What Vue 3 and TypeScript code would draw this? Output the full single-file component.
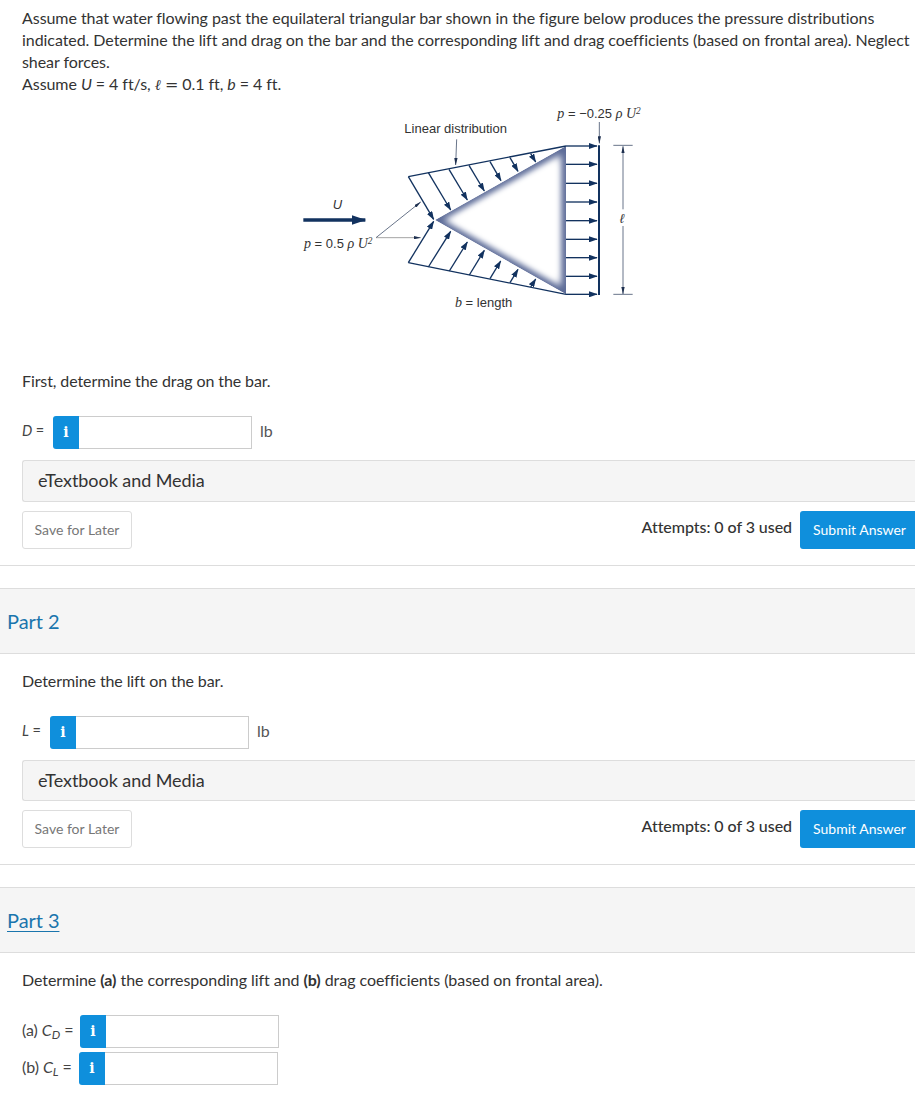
<script setup lang="ts">
interface Arrow { x1: number; y1: number; x2: number; y2: number }

const topArrows: Arrow[] = [
  { x1: 355, y1: 242, x2: 431, y2: 370 },
  { x1: 415, y1: 230, x2: 482, y2: 342 },
  { x1: 477, y1: 220, x2: 532, y2: 312 },
  { x1: 537, y1: 208, x2: 583, y2: 285 },
  { x1: 600, y1: 197, x2: 633, y2: 254 },
  { x1: 660, y1: 185, x2: 684, y2: 226 },
  { x1: 722, y1: 173, x2: 737, y2: 198 },
]
const bottomArrows: Arrow[] = [
  { x1: 355, y1: 500, x2: 431, y2: 376 },
  { x1: 415, y1: 513, x2: 482, y2: 406 },
  { x1: 478, y1: 525, x2: 532, y2: 438 },
  { x1: 538, y1: 537, x2: 583, y2: 463 },
  { x1: 600, y1: 548, x2: 632, y2: 495 },
  { x1: 660, y1: 560, x2: 684, y2: 520 },
  { x1: 722, y1: 573, x2: 737, y2: 549 },
]
const rightY: number[] = [150, 205, 262, 318, 374, 430, 485, 541, 595]
</script>

<template>
  <main class="page">
    <section class="intro">
      <p>Assume that water flowing past the equilateral triangular bar shown in the figure below produces the pressure distributions indicated. Determine the lift and drag on the bar and the corresponding lift and drag coefficients (based on frontal area). Neglect shear forces.</p>
      <p>Assume <i>U</i> = 4 ft/s, <i class="ell">ℓ</i> <span class="eq">=</span> 0.1 ft, <i>b</i> = 4 ft.</p>
    </section>

    <svg class="figure" viewBox="0 0 1080 675" width="360" height="225" aria-label="Triangular bar pressure distribution">
      <defs>
        <marker id="head" markerWidth="6.5" markerHeight="4.5" refX="6" refY="2.25" orient="auto">
          <path d="M0 0 L6.5 2.25 L0 4.5 Z" fill="#12325f" />
        </marker>
        <marker id="thin" markerWidth="11" markerHeight="5" refX="10.5" refY="2.5" orient="auto">
          <path d="M0 0 L11 2.5 L0 5 Z" fill="#1d2f4f" />
        </marker>
        <filter id="soft" x="-20%" y="-20%" width="140%" height="140%">
          <feGaussianBlur stdDeviation="9" />
        </filter>
        <clipPath id="tri"><path d="M435 372 L828 150 L828 595 Z" /></clipPath>
      </defs>

      <g clip-path="url(#tri)">
        <path d="M435 372 L828 150 L828 595 Z" fill="#5d6c98" />
        <path d="M462 372 L812 176 L812 570 Z" fill="#fff" filter="url(#soft)" />
        <path d="M490 372 L800 197 L800 548 Z" fill="#fff" filter="url(#soft)" />
      </g>

      <g fill="none" stroke="#12325f" stroke-width="4">
        <path d="M355 242 L828 150 M355 500 L828 595" />
        <line v-for="(a, i) in topArrows" :key="'t' + i" :x1="a.x1" :y1="a.y1" :x2="a.x2" :y2="a.y2" marker-end="url(#head)" />
        <line v-for="(a, i) in bottomArrows" :key="'b' + i" :x1="a.x1" :y1="a.y1" :x2="a.x2" :y2="a.y2" marker-end="url(#head)" />
        <line v-for="y in rightY" :key="y" x1="828" :y1="y" x2="921" :y2="y" marker-end="url(#head)" />
        <path d="M927 148 V597" stroke-width="6" />
        <line x1="40" y1="372" x2="226" y2="372" stroke-width="10" />
      </g>
      <path d="M186 358 L228 372 L186 386 Z" fill="#12325f" />

      <g fill="none" stroke="#1d2f4f" stroke-width="2">
        <path d="M970 148 H1028 M970 595 H1028" />
        <line x1="999" y1="340" x2="999" y2="151" marker-end="url(#thin)" />
        <line x1="999" y1="390" x2="999" y2="594" marker-end="url(#thin)" />
        <line x1="258" y1="425" x2="392" y2="318" marker-end="url(#thin)" />
        <line x1="258" y1="425" x2="392" y2="425" stroke="#777" marker-end="url(#thin)" />
        <line x1="500" y1="130" x2="497" y2="207" marker-end="url(#thin)" />
        <line x1="928" y1="78" x2="928" y2="142" marker-end="url(#thin)" />
      </g>

      <g class="fig-text">
        <text x="343" y="111">Linear distribution</text>
        <text x="802" y="67"><tspan class="fig-i">p</tspan> = −0.25 <tspan class="fig-i">ρ U</tspan><tspan class="fig-sup" dy="-14">2</tspan></text>
        <text x="42" y="457"><tspan class="fig-i">p</tspan> = 0.5 <tspan class="fig-i">ρ U</tspan><tspan class="fig-sup" dy="-14">2</tspan></text>
        <text x="495" y="634"><tspan class="fig-i">b</tspan> = length</text>
        <text x="128" y="340" class="fig-i">U</text>
        <text x="989" y="380" class="fig-i">ℓ</text>
      </g>
    </svg>

    <section class="question q1">
      <p class="prompt">First, determine the drag on the bar.</p>
      <div class="answer-row">
        <span class="label"><i>D</i> =</span>
        <span class="field"><span class="info">i</span><span class="box"></span></span>
        <span class="unit">lb</span>
      </div>
      <div class="media">eTextbook and Media</div>
      <div class="actions">
        <button class="save" type="button">Save for Later</button>
        <span class="attempts">Attempts: 0 of 3 used</span>
        <button class="submit" type="button">Submit Answer</button>
      </div>
    </section>

    <header class="part">Part 2</header>

    <section class="question q2">
      <p class="prompt">Determine the lift on the bar.</p>
      <div class="answer-row">
        <span class="label"><i>L</i> =</span>
        <span class="field"><span class="info">i</span><span class="box"></span></span>
        <span class="unit">lb</span>
      </div>
      <div class="media">eTextbook and Media</div>
      <div class="actions">
        <button class="save" type="button">Save for Later</button>
        <span class="attempts">Attempts: 0 of 3 used</span>
        <button class="submit" type="button">Submit Answer</button>
      </div>
    </section>

    <header class="part current">Part 3</header>

    <section class="question q3">
      <p class="prompt">Determine <b>(a)</b> the corresponding lift and <b>(b)</b> drag coefficients (based on frontal area).</p>
      <div class="answer-row tight first">
        <span class="label">(a) <i>C<sub>D</sub></i> =</span>
        <span class="field"><span class="info">i</span><span class="box"></span></span>
      </div>
      <div class="answer-row tight">
        <span class="label">(b) <i>C<sub>L</sub></i> =</span>
        <span class="field"><span class="info">i</span><span class="box"></span></span>
      </div>
    </section>
  </main>
</template>

<style>
html, body { margin: 0; background: #fff; overflow: hidden; }
</style>

<style scoped>
.page {
  width: 915px;
  height: 1094px;
  overflow: hidden;
  font-family: Lato, "Liberation Sans", sans-serif;
  font-size: 16px;
  line-height: 22px;
  letter-spacing: -0.06px;
  color: #333;
  background: #fff;
}
p { margin: 0; }
.intro { padding: 7px 0 0 22px; }
.ell { font-family: "DejaVu Serif", serif; font-size: 15px; }
.eq { font-family: "DejaVu Sans", sans-serif; }
.figure { display: block; margin: 0 0 0 290px; height: 225px; }
.fig-text text { font-family: "Liberation Sans", sans-serif; font-size: 39px; fill: #333; letter-spacing: 0; }
.fig-i { font-family: "Liberation Serif", serif; font-style: italic; font-size: 42px; }
.fig-sup { font-size: 28px; font-family: "Liberation Serif", serif; font-style: italic; }

.question { padding: 0 0 0 22px; }
.q1 { padding-top: 49px; height: 245px; box-sizing: border-box; border-bottom: 1px solid #ddd; }
.q2 { padding-top: 16px; height: 211px; box-sizing: border-box; border-bottom: 1px solid #ddd; }
.q3 { padding-top: 16px; }
.prompt { height: 22px; letter-spacing: -0.1px; }
.q3 .prompt { letter-spacing: -0.06px; }
.answer-row { display: flex; align-items: center; height: 33px; margin-top: 24px; }
.answer-row.tight + .answer-row.tight { margin-top: 4px; }
.label { font-size: 14.5px; color: #444; white-space: nowrap; padding-bottom: 3px; }
.q1 .label { width: 31px; }
.q2 .label { width: 28px; }
.q3 .label { width: 57px; font-size: 16px; }
.q3 .first .label { width: 58px; }
sub { font-size: 12px; line-height: 0; vertical-align: -3px; }
.field { display: flex; width: 199px; height: 33px; }
.info {
  width: 26px;
  flex: none;
  background: #0f8fdc;
  color: #fff;
  border-radius: 3px 0 0 3px;
  font-family: "DejaVu Serif", serif;
  font-weight: 700;
  font-size: 14px;
  line-height: 33px;
  text-align: center;
}
.box {
  flex: 1;
  border: 1px solid #ccc;
  border-left: none;
  background: #fff;
}
.unit { margin-left: 8px; font-size: 16px; color: #555; padding-bottom: 4px; }
.media {
  box-sizing: border-box;
  height: 42px;
  margin-top: 11px;
  padding-left: 15px;
  background: #f5f5f5;
  border: 1px solid #ddd;
  border-right: none;
  border-radius: 3px 0 0 3px;
  font-size: 18px;
  line-height: 39px;
  color: #333;
}
.q2 .media { height: 41px; }
.actions { display: flex; align-items: flex-start; margin-top: 9px; }
.save {
  box-sizing: border-box;
  width: 110px;
  height: 38px;
  padding: 0 0 2px;
  background: #fff;
  border: 1px solid #ddd;
  border-radius: 3px;
  font-family: inherit;
  font-size: 14px;
  letter-spacing: 0;
  color: #777;
}
.attempts { margin-left: auto; margin-right: 8px; padding-top: 5px; font-weight: 500; white-space: nowrap; }
.submit {
  box-sizing: border-box;
  width: 115px;
  height: 38px;
  padding: 0 0 2px 4px;
  background: #0f8fdc;
  border: none;
  border-radius: 3px 0 0 3px;
  color: #fff;
  font-family: inherit;
  font-size: 14px;
  letter-spacing: 0;
}
.part {
  box-sizing: border-box;
  height: 66px;
  margin-top: 22px;
  padding-left: 7px;
  background: #f5f5f5;
  border-top: 1px solid #ddd;
  border-bottom: 1px solid #ddd;
  font-size: 20px;
  line-height: 64px;
  color: #1a75ad;
}
.part.current { text-decoration: underline; text-underline-offset: 3px; text-decoration-thickness: 1px; }
</style>
